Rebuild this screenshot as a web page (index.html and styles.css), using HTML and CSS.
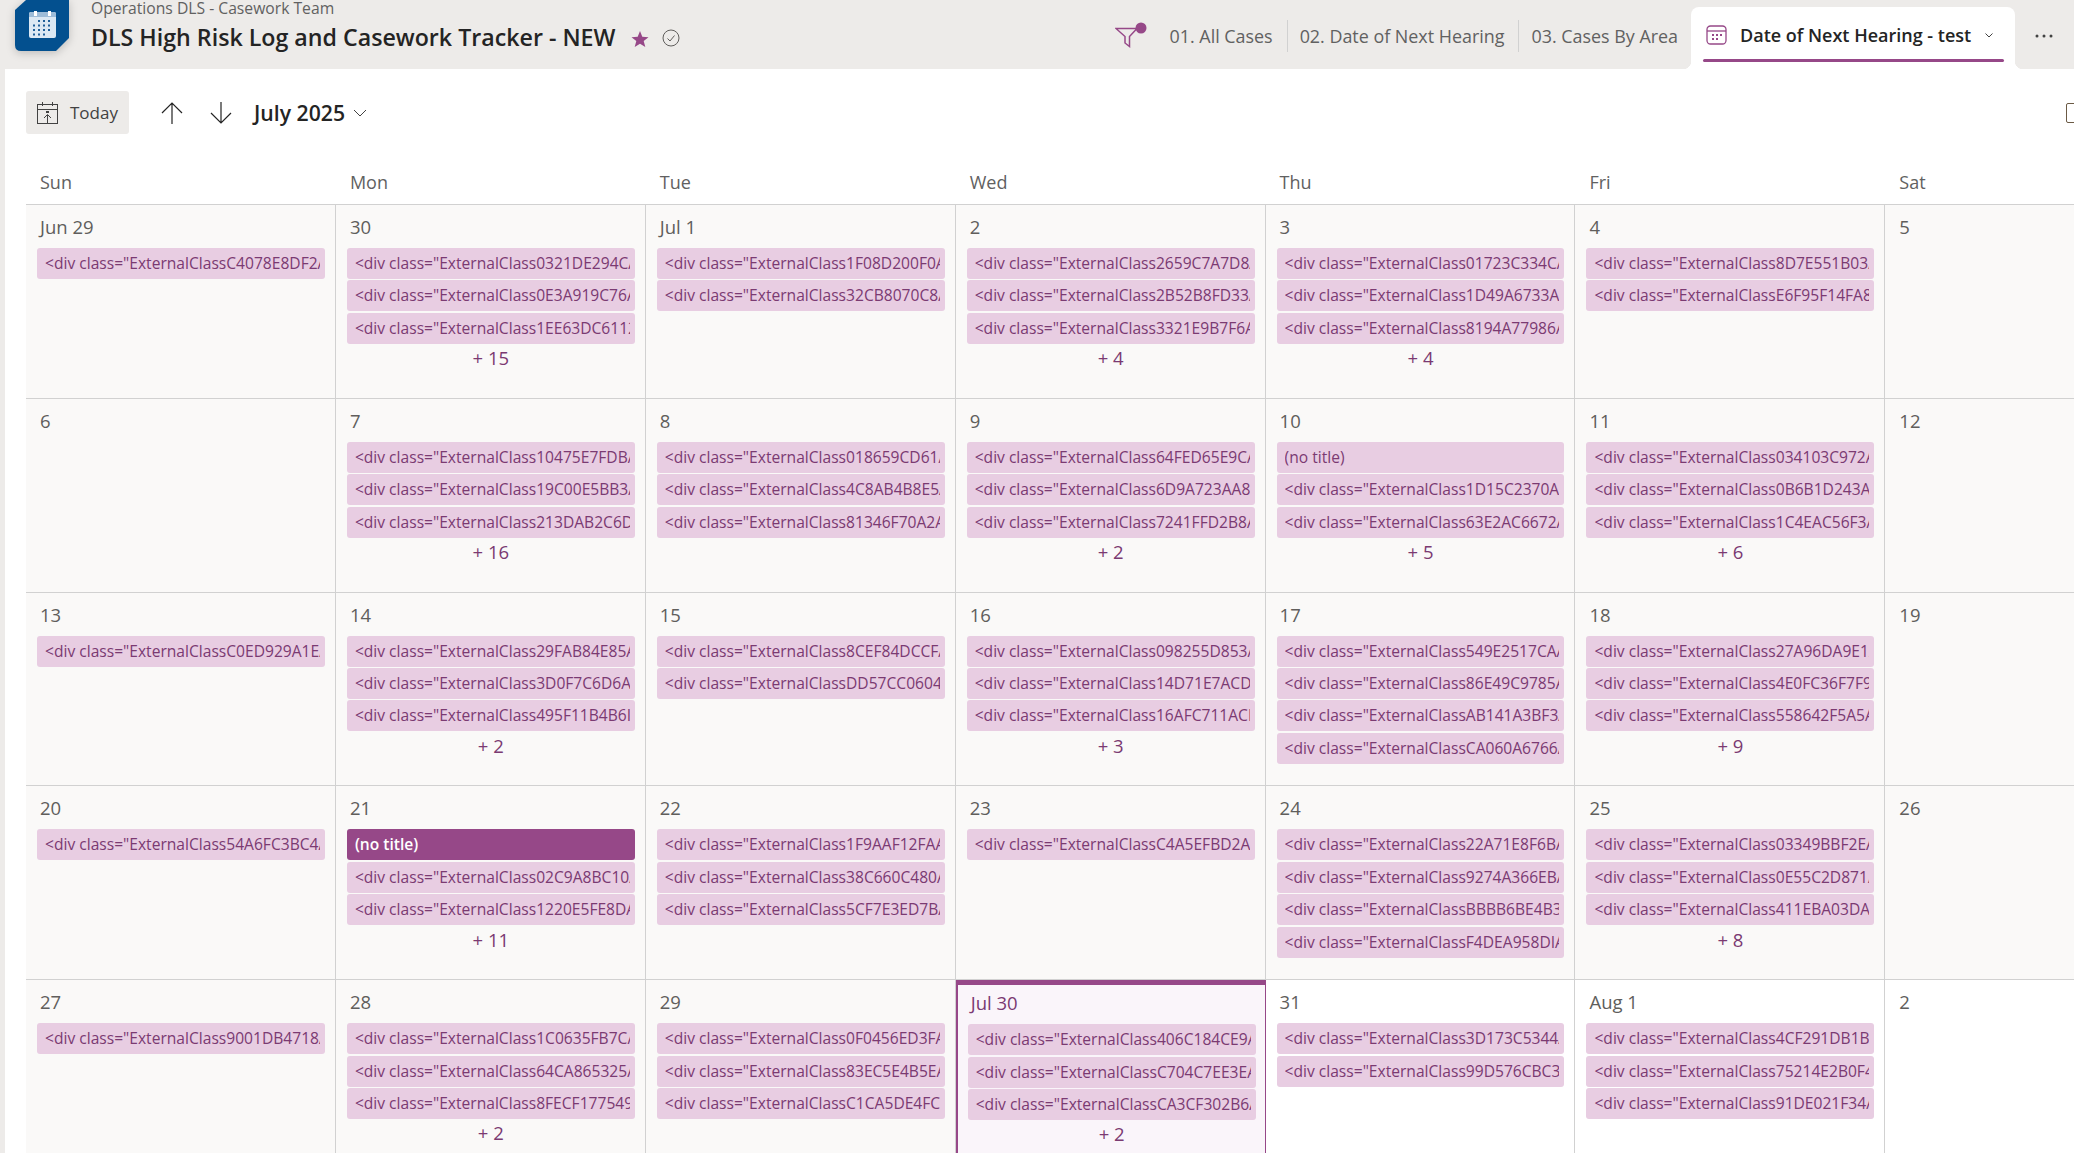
FILE: index.html
```html
<!DOCTYPE html>
<html>
<head>
    <title>DLS High Risk Log and Casework Tracker - NEW</title>
    <meta charset="utf-8" />
    <link rel="stylesheet" href="styles.css">
</head>
<body>

<!-- Top bar -->
<header class="topbar">
    <svg class="logo" width="54" height="51" viewBox="0 0 54 51">
        <path d="M11 0H54V38L41 51H6Q0 51 0 45V10Z" fill="#03508f"/>
        <rect x="14" y="12" width="27" height="26" rx="2" fill="#dbe8f3"/>
        <path d="M14 17V14Q14 12 16 12H39Q41 12 41 14V17Z" fill="#9dbcd8"/>
        <rect x="19" y="11" width="3" height="5" fill="#fff"/>
        <rect x="33" y="11" width="3" height="5" fill="#fff"/>
        <g fill="#1f5f99">
            <rect x="23" y="20" width="2" height="2"/><rect x="28" y="20" width="2" height="2"/><rect x="33" y="20" width="2" height="2"/>
            <rect x="18" y="24.500" width="2" height="2"/><rect x="23" y="24.500" width="2" height="2"/><rect x="28" y="24.500" width="2" height="2"/><rect x="33" y="24.500" width="2" height="2"/>
            <rect x="18" y="29" width="2" height="2"/><rect x="23" y="29" width="2" height="2"/><rect x="28" y="29" width="2" height="2"/><rect x="33" y="29" width="2" height="2"/>
            <rect x="18" y="33.500" width="2" height="2"/><rect x="23" y="33.500" width="2" height="2"/><rect x="28" y="33.500" width="2" height="2"/>
        </g>
    </svg>
    <div class="titles">
        <div class="team-name">Operations DLS - Casework Team</div>
        <div class="title-row">
            <h1>DLS High Risk Log and Casework Tracker - NEW</h1>
            <svg class="star" width="18" height="18" viewBox="0 0 18 18"><path d="M9 1L11.300 6.800L17.500 7.200L12.700 11.100L14.300 17L9 13.700L3.700 17L5.300 11.100L0.500 7.200L6.700 6.800Z" fill="#964888"/></svg>
            <svg class="check" width="18" height="18" viewBox="0 0 18 18" fill="none" stroke="#605e5c"><circle cx="9" cy="9" r="8"/><path d="M5.500 9.500L8 12L12.500 6.500"/></svg>
        </div>
    </div>
    <nav class="tabs">
        <svg class="filter" width="33" height="26" viewBox="0 0 33 26"><path d="M1 6.500H22L14.500 14.500V24.500L10 21V14.500Z" fill="none" stroke="#964888" stroke-width="1.500"/><circle cx="26" cy="6" r="5.500" fill="#964888"/></svg>
        <a class="tab">01. All Cases</a>
        <span class="tab-sep"></span>
        <a class="tab">02. Date of Next Hearing</a>
        <span class="tab-sep"></span>
        <a class="tab">03. Cases By Area</a>
        <div class="tab-active">
            <svg width="21" height="20" viewBox="0 0 21 20" fill="none" stroke="#964888" stroke-width="1.300"><rect x="1" y="1" width="19" height="18" rx="3.500"/><path d="M1 6H20"/><g fill="#964888" stroke="none"><rect x="6" y="9" width="2" height="2"/><rect x="10" y="9" width="2" height="2"/><rect x="14" y="9" width="2" height="2"/><rect x="6" y="13" width="2" height="2"/><rect x="10" y="13" width="2" height="2"/></g></svg>
            <span>Date of Next Hearing - test</span>
            <svg width="8" height="5" viewBox="0 0 8 5" fill="none" stroke="#424242"><path d="M0.500 0.500L4 4L7.500 0.500"/></svg>
        </div>
        <svg class="more" width="18" height="4" viewBox="0 0 18 4" fill="#424242"><circle cx="2" cy="2" r="1.500"/><circle cx="9" cy="2" r="1.500"/><circle cx="16" cy="2" r="1.500"/></svg>
    </nav>
</header>

<main class="content">
    <!-- Toolbar -->
    <div class="toolbar">
        <button class="today-btn">
            <svg width="21" height="24" viewBox="0 0 21 24" fill="none" stroke="#424242"><rect x="0.500" y="3.500" width="20" height="19"/><path d="M0.500 8.500H20.500M5.500 1V5M15.500 1V5M10.500 23V14M7 17L10.500 13.500L14 17"/><rect x="9" y="10" width="3" height="2" fill="#424242" stroke="none"/></svg>
            Today
        </button>
        <svg class="arrow arrow-up" width="22" height="22" viewBox="0 0 22 22" fill="none" stroke="#242424" stroke-width="1.200"><path d="M11 22V1M1 11L11 1L21 11"/></svg>
        <svg class="arrow arrow-down" width="22" height="22" viewBox="0 0 22 22" fill="none" stroke="#242424" stroke-width="1.200"><path d="M11 0V21M1 11L11 21L21 11"/></svg>
        <div class="month">July 2025</div>
        <svg width="14" height="8" viewBox="0 0 14 8" fill="none" stroke="#424242"><path d="M1 1L7 7L13 1"/></svg>
        <span class="clipped-icon"></span>
    </div>

    <!-- Weekday names -->
    <div class="weekdays">
        <div>Sun</div><div>Mon</div><div>Tue</div><div>Wed</div><div>Thu</div><div>Fri</div><div>Sat</div>
    </div>

    <!-- Month grid -->
    <div class="calendar">
        <div class="day past">
            <div class="date">Jun 29</div>
            <div class="event"><span>&lt;div class="ExternalClassC4078E8DF2A</span></div>
        </div>
        <div class="day past">
            <div class="date">30</div>
            <div class="event"><span>&lt;div class="ExternalClass0321DE294CA</span></div>
            <div class="event"><span>&lt;div class="ExternalClass0E3A919C76A</span></div>
            <div class="event"><span>&lt;div class="ExternalClass1EE63DC6112A</span></div>
            <div class="more-count">+ 15</div>
        </div>
        <div class="day past">
            <div class="date">Jul 1</div>
            <div class="event"><span>&lt;div class="ExternalClass1F08D200F0A</span></div>
            <div class="event"><span>&lt;div class="ExternalClass32CB8070C8A</span></div>
        </div>
        <div class="day past">
            <div class="date">2</div>
            <div class="event"><span>&lt;div class="ExternalClass2659C7A7D8A</span></div>
            <div class="event"><span>&lt;div class="ExternalClass2B52B8FD33A</span></div>
            <div class="event"><span>&lt;div class="ExternalClass3321E9B7F6A</span></div>
            <div class="more-count">+ 4</div>
        </div>
        <div class="day past">
            <div class="date">3</div>
            <div class="event"><span>&lt;div class="ExternalClass01723C334CA</span></div>
            <div class="event"><span>&lt;div class="ExternalClass1D49A6733AA</span></div>
            <div class="event"><span>&lt;div class="ExternalClass8194A77986A</span></div>
            <div class="more-count">+ 4</div>
        </div>
        <div class="day past">
            <div class="date">4</div>
            <div class="event"><span>&lt;div class="ExternalClass8D7E551B03A</span></div>
            <div class="event"><span>&lt;div class="ExternalClassE6F95F14FA8A</span></div>
        </div>
        <div class="day past">
            <div class="date">5</div>
        </div>

        <div class="day past">
            <div class="date">6</div>
        </div>
        <div class="day past">
            <div class="date">7</div>
            <div class="event"><span>&lt;div class="ExternalClass10475E7FDBA</span></div>
            <div class="event"><span>&lt;div class="ExternalClass19C00E5BB3A</span></div>
            <div class="event"><span>&lt;div class="ExternalClass213DAB2C6DA</span></div>
            <div class="more-count">+ 16</div>
        </div>
        <div class="day past">
            <div class="date">8</div>
            <div class="event"><span>&lt;div class="ExternalClass018659CD61A</span></div>
            <div class="event"><span>&lt;div class="ExternalClass4C8AB4B8E5A</span></div>
            <div class="event"><span>&lt;div class="ExternalClass81346F70A2A</span></div>
        </div>
        <div class="day past">
            <div class="date">9</div>
            <div class="event"><span>&lt;div class="ExternalClass64FED65E9CA</span></div>
            <div class="event"><span>&lt;div class="ExternalClass6D9A723AA8A</span></div>
            <div class="event"><span>&lt;div class="ExternalClass7241FFD2B8A</span></div>
            <div class="more-count">+ 2</div>
        </div>
        <div class="day past">
            <div class="date">10</div>
            <div class="event"><span>(no title)</span></div>
            <div class="event"><span>&lt;div class="ExternalClass1D15C2370AA</span></div>
            <div class="event"><span>&lt;div class="ExternalClass63E2AC6672A</span></div>
            <div class="more-count">+ 5</div>
        </div>
        <div class="day past">
            <div class="date">11</div>
            <div class="event"><span>&lt;div class="ExternalClass034103C972A</span></div>
            <div class="event"><span>&lt;div class="ExternalClass0B6B1D243AA</span></div>
            <div class="event"><span>&lt;div class="ExternalClass1C4EAC56F3A</span></div>
            <div class="more-count">+ 6</div>
        </div>
        <div class="day past">
            <div class="date">12</div>
        </div>

        <div class="day past">
            <div class="date">13</div>
            <div class="event"><span>&lt;div class="ExternalClassC0ED929A1EA</span></div>
        </div>
        <div class="day past">
            <div class="date">14</div>
            <div class="event"><span>&lt;div class="ExternalClass29FAB84E85A</span></div>
            <div class="event"><span>&lt;div class="ExternalClass3D0F7C6D6AA</span></div>
            <div class="event"><span>&lt;div class="ExternalClass495F11B4B6IA</span></div>
            <div class="more-count">+ 2</div>
        </div>
        <div class="day past">
            <div class="date">15</div>
            <div class="event"><span>&lt;div class="ExternalClass8CEF84DCCFA</span></div>
            <div class="event"><span>&lt;div class="ExternalClassDD57CC0604A</span></div>
        </div>
        <div class="day past">
            <div class="date">16</div>
            <div class="event"><span>&lt;div class="ExternalClass098255D853A</span></div>
            <div class="event"><span>&lt;div class="ExternalClass14D71E7ACDA</span></div>
            <div class="event"><span>&lt;div class="ExternalClass16AFC711ACIA</span></div>
            <div class="more-count">+ 3</div>
        </div>
        <div class="day past">
            <div class="date">17</div>
            <div class="event"><span>&lt;div class="ExternalClass549E2517CAA</span></div>
            <div class="event"><span>&lt;div class="ExternalClass86E49C9785A</span></div>
            <div class="event"><span>&lt;div class="ExternalClassAB141A3BF3A</span></div>
            <div class="event"><span>&lt;div class="ExternalClassCA060A6766A</span></div>
        </div>
        <div class="day past">
            <div class="date">18</div>
            <div class="event"><span>&lt;div class="ExternalClass27A96DA9E1A</span></div>
            <div class="event"><span>&lt;div class="ExternalClass4E0FC36F7F9A</span></div>
            <div class="event"><span>&lt;div class="ExternalClass558642F5A5A</span></div>
            <div class="more-count">+ 9</div>
        </div>
        <div class="day past">
            <div class="date">19</div>
        </div>

        <div class="day past">
            <div class="date">20</div>
            <div class="event"><span>&lt;div class="ExternalClass54A6FC3BC4A</span></div>
        </div>
        <div class="day past">
            <div class="date">21</div>
            <div class="event event-strong"><span>(no title)</span></div>
            <div class="event"><span>&lt;div class="ExternalClass02C9A8BC10A</span></div>
            <div class="event"><span>&lt;div class="ExternalClass1220E5FE8DA</span></div>
            <div class="more-count">+ 11</div>
        </div>
        <div class="day past">
            <div class="date">22</div>
            <div class="event"><span>&lt;div class="ExternalClass1F9AAF12FAA</span></div>
            <div class="event"><span>&lt;div class="ExternalClass38C660C480A</span></div>
            <div class="event"><span>&lt;div class="ExternalClass5CF7E3ED7BA</span></div>
        </div>
        <div class="day past">
            <div class="date">23</div>
            <div class="event"><span>&lt;div class="ExternalClassC4A5EFBD2AA</span></div>
        </div>
        <div class="day past">
            <div class="date">24</div>
            <div class="event"><span>&lt;div class="ExternalClass22A71E8F6BA</span></div>
            <div class="event"><span>&lt;div class="ExternalClass9274A366EBA</span></div>
            <div class="event"><span>&lt;div class="ExternalClassBBBB6BE4B3A</span></div>
            <div class="event"><span>&lt;div class="ExternalClassF4DEA958DIA</span></div>
        </div>
        <div class="day past">
            <div class="date">25</div>
            <div class="event"><span>&lt;div class="ExternalClass03349BBF2EA</span></div>
            <div class="event"><span>&lt;div class="ExternalClass0E55C2D871A</span></div>
            <div class="event"><span>&lt;div class="ExternalClass411EBA03DAA</span></div>
            <div class="more-count">+ 8</div>
        </div>
        <div class="day past">
            <div class="date">26</div>
        </div>

        <div class="day past">
            <div class="date">27</div>
            <div class="event"><span>&lt;div class="ExternalClass9001DB4718A</span></div>
        </div>
        <div class="day past">
            <div class="date">28</div>
            <div class="event"><span>&lt;div class="ExternalClass1C0635FB7CA</span></div>
            <div class="event"><span>&lt;div class="ExternalClass64CA865325A</span></div>
            <div class="event"><span>&lt;div class="ExternalClass8FECF177549A</span></div>
            <div class="more-count">+ 2</div>
        </div>
        <div class="day past">
            <div class="date">29</div>
            <div class="event"><span>&lt;div class="ExternalClass0F0456ED3FA</span></div>
            <div class="event"><span>&lt;div class="ExternalClass83EC5E4B5EA</span></div>
            <div class="event"><span>&lt;div class="ExternalClassC1CA5DE4FCA</span></div>
        </div>
        <div class="day today">
            <div class="date">Jul 30</div>
            <div class="event"><span>&lt;div class="ExternalClass406C184CE9A</span></div>
            <div class="event"><span>&lt;div class="ExternalClassC704C7EE3EA</span></div>
            <div class="event"><span>&lt;div class="ExternalClassCA3CF302B6A</span></div>
            <div class="more-count">+ 2</div>
        </div>
        <div class="day">
            <div class="date">31</div>
            <div class="event"><span>&lt;div class="ExternalClass3D173C5344A</span></div>
            <div class="event"><span>&lt;div class="ExternalClass99D576CBC3A</span></div>
        </div>
        <div class="day">
            <div class="date">Aug 1</div>
            <div class="event"><span>&lt;div class="ExternalClass4CF291DB1BA</span></div>
            <div class="event"><span>&lt;div class="ExternalClass75214E2B0F4A</span></div>
            <div class="event"><span>&lt;div class="ExternalClass91DE021F34A</span></div>
        </div>
        <div class="day">
            <div class="date">2</div>
        </div>
    </div>
</main>

</body>
</html>
```

FILE: styles.css
```css
/* Base */
html, body {
    height: 100%;
}

body {
    margin: 0;
    overflow: hidden;
    background: #edebe9;
    font-family: "Open Sans", "Noto Sans", sans-serif;
    color: #242424;
}

/* Top bar */
.topbar {
    display: flex;
    height: 69px;
}

.logo {
    flex: none;
    margin-left: 15px;
    filter: drop-shadow(0 2px 4px rgba(0,0,0,0.2));
}

.titles {
    margin-left: 22px;
}

.team-name {
    font-size: 15.700px;
    line-height: 16px;
    color: #616161;
}

.title-row {
    display: flex;
    align-items: center;
    margin-top: 8px;
}

h1 {
    margin: 0;
    font-size: 23.200px;
    line-height: 26px;
    font-weight: 600;
}

.star {
    margin: 3px 0 0 16px;
}

.check {
    margin: 2px 0 0 13px;
}

/* Tabs */
.tabs {
    display: flex;
    align-items: flex-start;
    margin-left: auto;
    padding-right: 21px;
}

.filter {
    margin: 22px 22px 0 0;
}

.tab {
    margin-top: 25px;
    font-size: 17.900px;
    line-height: 22px;
    color: #616161;
}

.tab-sep {
    width: 1px;
    height: 32px;
    margin: 20px 12px 0 14px;
    background: #d1d1d1;
}

.tab-active {
    position: relative;
    display: flex;
    align-items: flex-start;
    flex: none;
    width: 324px;
    height: 62px;
    margin: 7px 20px 0 13px;
    padding-left: 15px;
    box-sizing: border-box;
    background: white;
    border-radius: 8px 8px 0 0;
    font-size: 18px;
    font-weight: 600;
}

.tab-active svg:first-child {
    margin-top: 18px;
}

.tab-active span {
    margin: 16px 0 0 13px;
    line-height: 24px;
}

.tab-active svg:last-child {
    margin: 26px 0 0 14px;
}

.tab-active::after {
    content: "";
    position: absolute;
    left: 12px;
    right: 11px;
    top: 52px;
    height: 3px;
    border-radius: 2px;
    background: #964888;
}

/* Flared bottom corners of the active tab */
.tab-active::before {
    content: "";
    position: absolute;
    left: -8px;
    right: -8px;
    bottom: 0;
    height: 8px;
    background:
        radial-gradient(circle at 0 0, #edebe9 8px, white 8.500px) left / 8px 8px no-repeat,
        radial-gradient(circle at 100% 0, #edebe9 8px, white 8.500px) right / 8px 8px no-repeat;
}

.more {
    margin-top: 34px;
}

/* Page content */
.content {
    height: 1084px;
    margin-left: 5px;
    overflow: hidden;
    background: white;
}

.toolbar {
    position: relative;
    display: flex;
    align-items: center;
    height: 43px;
    padding: 22px 0 0 21px;
}

.today-btn {
    display: flex;
    align-items: center;
    gap: 12px;
    width: 103px;
    height: 43px;
    padding: 0 0 0 11px;
    border: none;
    border-radius: 3px;
    background: #edebe9;
    color: #424242;
    font-family: inherit;
    font-size: 17px;
}

.arrow-up {
    margin-left: 32px;
}

.arrow-down {
    margin-left: 27px;
}

.month {
    margin: 0 8px 0 22px;
    font-size: 21.200px;
    font-weight: 600;
}

.clipped-icon {
    position: absolute;
    left: 2061px;
    top: 34px;
    width: 18px;
    height: 18px;
    border: 1.500px solid #6b5a45;
    border-radius: 2px;
}

/* Calendar */
.weekdays {
    display: grid;
    grid-template-columns: repeat(7, 309.900px);
    height: 39px;
    margin: 31px 0 0 21px;
    padding-top: 0;
    border-bottom: 1px solid #d1d1d1;
    font-size: 18px;
    line-height: 34px;
    color: #616161;
}

.weekdays div {
    padding-left: 14px;
}

.calendar {
    display: grid;
    grid-template-columns: repeat(7, 309.900px);
    grid-auto-rows: 193.800px;
    margin-left: 21px;
}

.day {
    box-sizing: border-box;
    padding: 10px 10px 0 11px;
    border-right: 1px solid #d1d1d1;
    border-bottom: 1px solid #d1d1d1;
}

.past {
    background: #faf9f8;
}

.today {
    padding: 6px 9px 0 10px;
    border: 1px solid #964888;
    border-left-width: 2px;
    border-top: 5px solid #964888;
    background: #faf5fa;
}

.date {
    height: 24px;
    margin: 0 0 9px 3px;
    font-size: 18.500px;
    font-weight: 500;
    line-height: 24px;
    color: #605e5c;
}

.today .date {
    color: #7b3a72;
}

.event {
    height: 31px;
    margin-bottom: 1.400px;
    padding: 0 5px 0 8px;
    border-radius: 3px;
    background: #e8cde2;
    color: #7b3a72;
    font-size: 15.600px;
    line-height: 30px;
}

.event span {
    display: block;
    overflow: hidden;
    white-space: nowrap;
}

.event-strong {
    background: #964888;
    color: white;
    font-weight: 600;
}

.more-count {
    height: 28px;
    margin-top: -1px;
    font-size: 18.500px;
    line-height: 28px;
    text-align: center;
    color: #7b3a72;
}
```
